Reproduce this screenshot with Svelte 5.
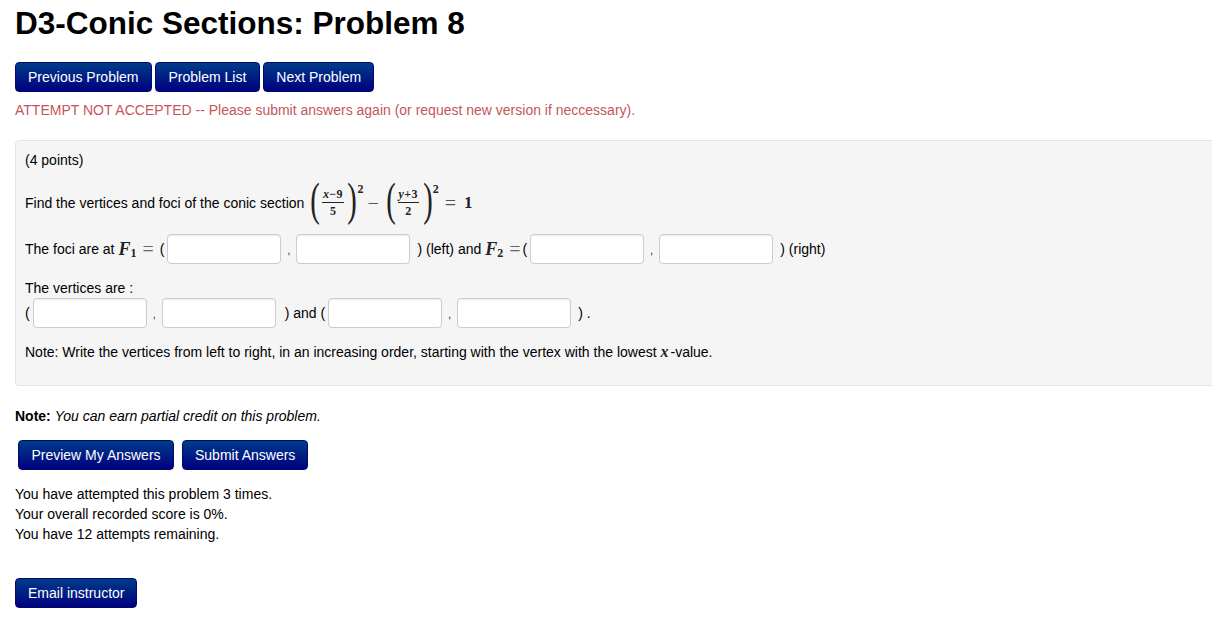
<script>
  const navLinks = ['Previous Problem', 'Problem List', 'Next Problem'];
</script>

<div class="page">
  <h1>D3-Conic Sections: Problem 8</h1>

  <div class="nav">
    {#each navLinks as label}
      <a class="btn" href="#top">{label}</a>
    {/each}
  </div>

  <p class="warning">ATTEMPT NOT ACCEPTED -- Please submit answers again (or request new version if neccessary).</p>

  <section class="well">
    <p class="points">(4 points)</p>

    <div class="find">
      <span>Find the vertices and foci of the conic section</span>
      <span class="math eq">
        <span class="paren">(</span>
        <span class="frac"><span class="num"><i>x</i>−9</span><span class="den">5</span></span>
        <span class="paren">)</span>
        <sup>2</sup>
        <span class="op minus">−</span>
        <span class="paren">(</span>
        <span class="frac"><span class="num"><i>y</i>+3</span><span class="den">2</span></span>
        <span class="paren">)</span>
        <sup>2</sup>
        <span class="op equals">=</span>
        <span class="one">1</span>
      </span>
    </div>

    <div class="row foci">
      <span>The foci are at</span>
      <span class="math var"><i>F</i><sub>1</sub></span>
      <span class="math rel">=</span>
      <span class="open">(</span>
      <input type="text" />
      <span class="comma">,</span>
      <input type="text" />
      <span class="close">) (left) and</span>
      <span class="math var"><i>F</i><sub>2</sub></span>
      <span class="math rel tight">=</span>
      <span class="open">(</span>
      <input type="text" />
      <span class="comma">,</span>
      <input type="text" />
      <span class="close">) (right)</span>
    </div>

    <p class="label">The vertices are :</p>
    <div class="row vertices">
      <span class="open">(</span>
      <input type="text" />
      <span class="comma">,</span>
      <input type="text" />
      <span class="close wide">) and (</span>
      <input type="text" />
      <span class="comma">,</span>
      <input type="text" />
      <span class="close">) .</span>
    </div>

    <p class="hint">Note: Write the vertices from left to right, in an increasing order, starting with the vertex with the lowest <i class="math hint-x">x</i>-value.</p>
  </section>

  <p class="credit"><strong>Note:</strong> <em>You can earn partial credit on this problem.</em></p>

  <div class="actions">
    <button type="button" class="btn">Preview My Answers</button>
    <button type="button" class="btn">Submit Answers</button>
  </div>

  <div class="score">
    <div>You have attempted this problem 3 times.</div>
    <div>Your overall recorded score is 0%.</div>
    <div>You have 12 attempts remaining.</div>
  </div>

  <button type="button" class="btn email">Email instructor</button>
</div>

<style>
  :global(body) {
    margin: 0;
    overflow: hidden;
    background: #fff;
  }

  .page {
    padding: 0 0 0 15px;
    color: #000;
    font-family: "Liberation Sans", Arial, sans-serif;
    font-size: 14px;
    line-height: 20px;
  }

  h1 {
    margin: 0;
    padding-top: 5px;
    font-size: 31.5px;
    line-height: 36px;
    font-weight: 700;
  }

  .nav {
    display: flex;
    gap: 3px;
    margin-top: 21px;
  }

  .nav .btn:nth-child(2) {
    padding: 4px 13px;
  }

  .btn {
    display: inline-block;
    box-sizing: border-box;
    height: 30px;
    padding: 4px 12px;
    border: 1px solid #000a6b;
    border-radius: 4px;
    background: linear-gradient(#003c8a, #00007f);
    color: #fff;
    font-family: inherit;
    font-size: 14px;
    line-height: 20px;
    text-decoration: none;
  }

  .warning {
    margin: 8px 0 0;
    color: #c4565a;
  }

  .well {
    box-sizing: border-box;
    width: 1300px;
    height: 246px;
    margin-top: 20px;
    padding: 9px 9px;
    border: 1px solid #e3e3e3;
    border-radius: 4px;
    background: #f5f5f5;
  }

  .well p {
    margin: 0;
  }

  .find {
    display: flex;
    align-items: center;
    height: 44px;
    margin-top: 11px;
  }

  .math {
    font-family: "Liberation Serif", "DejaVu Serif", serif;
  }

  .eq {
    display: inline-flex;
    align-items: center;
    margin-left: 4px;
    color: #222;
    font-weight: 700;
  }

  .paren {
    position: relative;
    top: -3px;
    width: 12px;
    font-size: 46px;
    font-weight: 400;
    line-height: 44px;
    text-align: center;
    transform: scaleX(0.62);
  }

  .frac {
    display: inline-flex;
    flex-direction: column;
    align-items: center;
    min-width: 25px;
    font-size: 12px;
    line-height: 13px;
  }

  .num {
    padding: 0 1px 1px;
    border-bottom: 1px solid #222;
    letter-spacing: 0.3px;
  }

  .den {
    padding-top: 2px;
  }

  sup {
    position: relative;
    top: 1px;
    align-self: flex-start;
    font-size: 12px;
    line-height: 14px;
  }

  .op {
    font-size: 20px;
    font-weight: 400;
    color: #555;
  }

  .minus {
    margin: 0 5px 0 4px;
  }

  .equals {
    margin: 0 8px 0 6px;
  }

  .one {
    font-size: 17px;
  }

  .row {
    display: flex;
    align-items: center;
    height: 30px;
  }

  .foci {
    margin-top: 9px;
  }

  .foci .close {
    margin-right: 0;
  }

  .var {
    margin-left: 4px;
    font-size: 18px;
    font-weight: 700;
    color: #222;
  }

  .var sub {
    position: relative;
    top: -1px;
    font-size: 12px;
    font-style: normal;
    line-height: 0;
    vertical-align: -3px;
  }

  .rel {
    margin: 0 6px 0 6px;
    font-size: 20px;
    color: #666;
  }

  .rel.tight {
    margin-right: 2px;
  }

  .open {
    margin: 0 3px 0 0;
  }

  .close {
    margin: 0 3px 0 7px;
  }

  .close.wide {
    margin-left: 9px;
  }

  .comma {
    position: relative;
    top: 2px;
    width: 15px;
    font-size: 10px;
    text-align: center;
  }

  input {
    box-sizing: border-box;
    width: 114px;
    height: 30px;
    margin: 0;
    padding: 4px 6px;
    border: 1px solid #ccc;
    border-radius: 4px;
    background: #fff;
    box-shadow: inset 0 1px 1px rgba(0, 0, 0, 0.075);
  }

  .well .label {
    margin-top: 15px;
    line-height: 19px;
  }

  .well .hint {
    margin-top: 14px;
  }

  .hint-x {
    padding-right: 2px;
    font-size: 16px;
    font-weight: 700;
    color: #222;
  }

  .credit {
    margin: 20px 0 0;
  }

  .actions {
    display: flex;
    gap: 8px;
    margin: 14px 0 0 3px;
  }

  .actions .btn:first-child {
    min-width: 156px;
  }

  .score {
    margin-top: 14px;
  }

  .email {
    display: block;
    margin-top: 34px;
  }
</style>
